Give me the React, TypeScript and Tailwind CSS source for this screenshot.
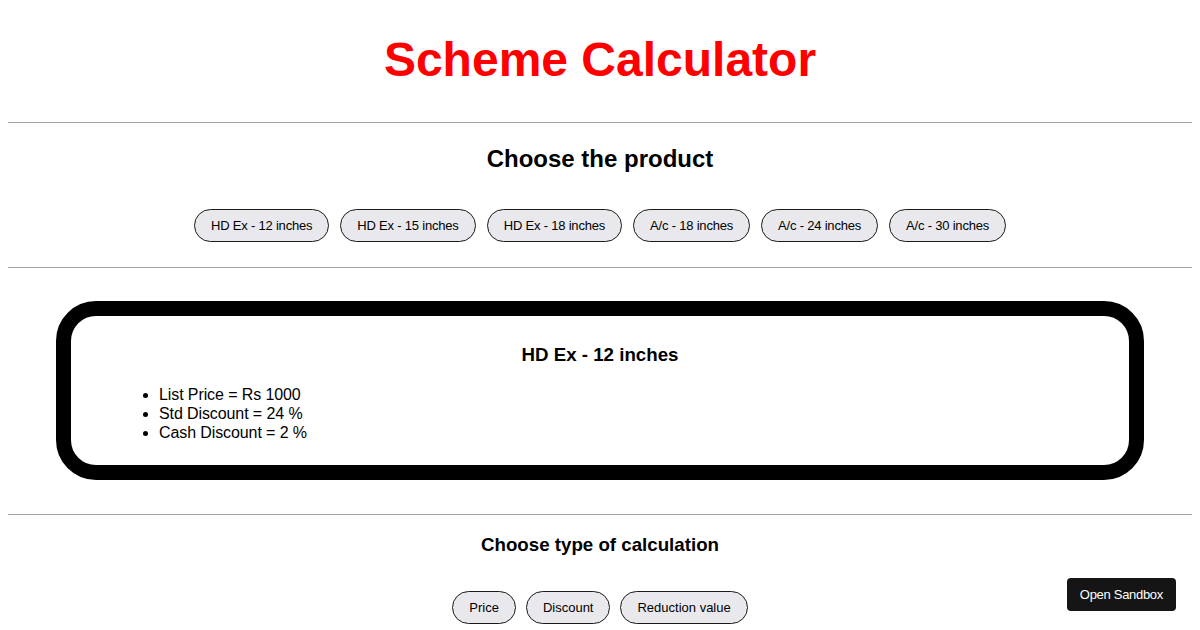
import React, { useState } from 'react';

const products = [
  { name: 'HD Ex - 12 inches', listPrice: 1000, stdDiscount: 24, cashDiscount: 2 },
  { name: 'HD Ex - 15 inches', listPrice: 1200, stdDiscount: 24, cashDiscount: 2 },
  { name: 'HD Ex - 18 inches', listPrice: 1500, stdDiscount: 24, cashDiscount: 2 },
  { name: 'A/c - 18 inches', listPrice: 1400, stdDiscount: 22, cashDiscount: 2 },
  { name: 'A/c - 24 inches', listPrice: 1800, stdDiscount: 22, cashDiscount: 2 },
  { name: 'A/c - 30 inches', listPrice: 2200, stdDiscount: 22, cashDiscount: 2 },
];

const calcTypes = ['Price', 'Discount', 'Reduction value'];

function PillButton({
  text,
  onClick,
  tight,
}: {
  text: string;
  onClick?: () => void;
  tight?: boolean;
}) {
  return (
    <button
      onClick={onClick}
      className={
        tight
          ? 'rounded-full border border-[#1a1a1a] bg-[#e9e9ed] px-4 py-2 text-[13px] leading-[15px] tracking-[-0.2px] text-black'
          : 'rounded-full border border-[#1a1a1a] bg-[#e9e9ed] px-4 py-2 text-[13px] leading-[15px] text-black'
      }
    >
      {text}
    </button>
  );
}

export default function App() {
  const [selected, setSelected] = useState<any>(products[0]);
  const [calcType, setCalcType] = useState<any>();

  return (
    <div
      className="h-[630px] overflow-hidden bg-white px-2 pt-[32px] text-black"
      style={{ fontFamily: '"Liberation Sans", Arial, sans-serif' }}
    >
      <h1 className="text-center text-[48px] font-bold leading-[55px] text-[#ff0000]">
        Scheme Calculator
      </h1>
      <hr className="mt-[35px] border-t border-[#a3a3a3]" />

      {/* product picker */}
      <h2 className="mt-[22px] text-center text-[24px] font-bold leading-[28px]">
        Choose the product
      </h2>
      <div className="mt-[36px] flex justify-center gap-[11px]">
        {products.map((p) => (
          <PillButton key={p.name} text={p.name} tight onClick={() => setSelected(p)} />
        ))}
      </div>
      <hr className="mt-[25px] border-t border-[#a3a3a3]" />

      {/* selected product card */}
      <div className="mx-[48px] mt-[33px] rounded-[40px] border-[15px] border-black pb-[23px]">
        <h3 className="mt-[28px] text-center text-[18.72px] font-bold leading-[21.5px]">
          {selected.name}
        </h3>
        <ul className="ml-[48px] mt-[19px] list-disc pl-[40px] text-[16px] leading-[19px] tracking-[-0.1px]">
          <li>List Price = Rs {selected.listPrice}</li>
          <li>Std Discount = {selected.stdDiscount} %</li>
          <li>Cash Discount = {selected.cashDiscount} %</li>
        </ul>
      </div>
      <hr className="mt-[34px] border-t border-[#a3a3a3]" />

      <h3 className="mt-[19px] text-center text-[18.72px] font-bold leading-[21.5px]">
        Choose type of calculation
      </h3>
      <div className="mt-[36px] flex justify-center gap-[10px]">
        {calcTypes.map((c) => (
          <PillButton key={c} text={c} onClick={() => setCalcType(c)} />
        ))}
      </div>
      {calcType ? null : null}

      <button className="fixed bottom-[19px] right-[24px] rounded-[4px] bg-[#151515] px-[13px] py-[8px] text-[13px] leading-[17px] tracking-[-0.3px] text-white">
        Open Sandbox
      </button>
    </div>
  );
}
